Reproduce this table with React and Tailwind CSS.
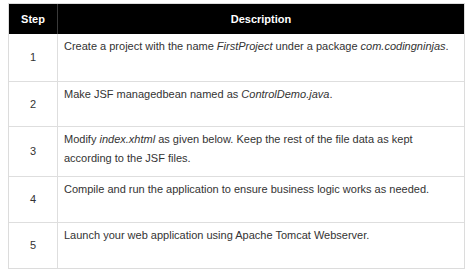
const ROWS = [
  {
    step: '1',
    h: 'h-[47px]',
    desc: (
      <>
        Create a project with the name <i>FirstProject</i> under a package <i>com.codingninjas</i>.
      </>
    ),
  },
  {
    step: '2',
    h: 'h-[45px]',
    desc: (
      <>
        Make JSF managedbean named as <i>ControlDemo.java</i>.
      </>
    ),
  },
  {
    step: '3',
    h: 'h-[50px]',
    desc: (
      <>
        Modify <i>index.xhtml</i> as given below. Keep the rest of the file data as kept
        <br />
        according to the JSF files.
      </>
    ),
  },
  {
    step: '4',
    h: 'h-[46px]',
    desc: <>Compile and run the application to ensure business logic works as needed.</>,
  },
  {
    step: '5',
    h: 'h-[46px]',
    desc: <>Launch your web application using Apache Tomcat Webserver.</>,
  },
]

export default function App() {
  return (
    <div className="w-[474px] h-[278px] bg-white pt-[3px] pl-[8px] font-['Liberation_Sans',Arial,sans-serif]">
      <div className="w-[457px] border border-[#dcdcdc]">
        {/* header */}
        <div className="flex h-[30px] bg-black text-white text-[11px] font-bold">
          <div className="w-[49px] flex items-center justify-center border-r border-[#3a3a3a]">Step</div>
          <div className="flex-1 flex items-center justify-center">Description</div>
        </div>

        {ROWS.map((row, i) => (
          <div
            key={row.step}
            className={`flex ${row.h} text-[11px] text-[#333] ${i > 0 ? 'border-t border-[#dedede]' : ''}`}
          >
            <div className="w-[49px] flex items-center justify-center border-r border-[#dedede]">{row.step}</div>
            <div className="flex-1 pl-[6px] pr-[4px] pt-[3px] leading-[19px] whitespace-nowrap">{row.desc}</div>
          </div>
        ))}
      </div>
    </div>
  )
}
